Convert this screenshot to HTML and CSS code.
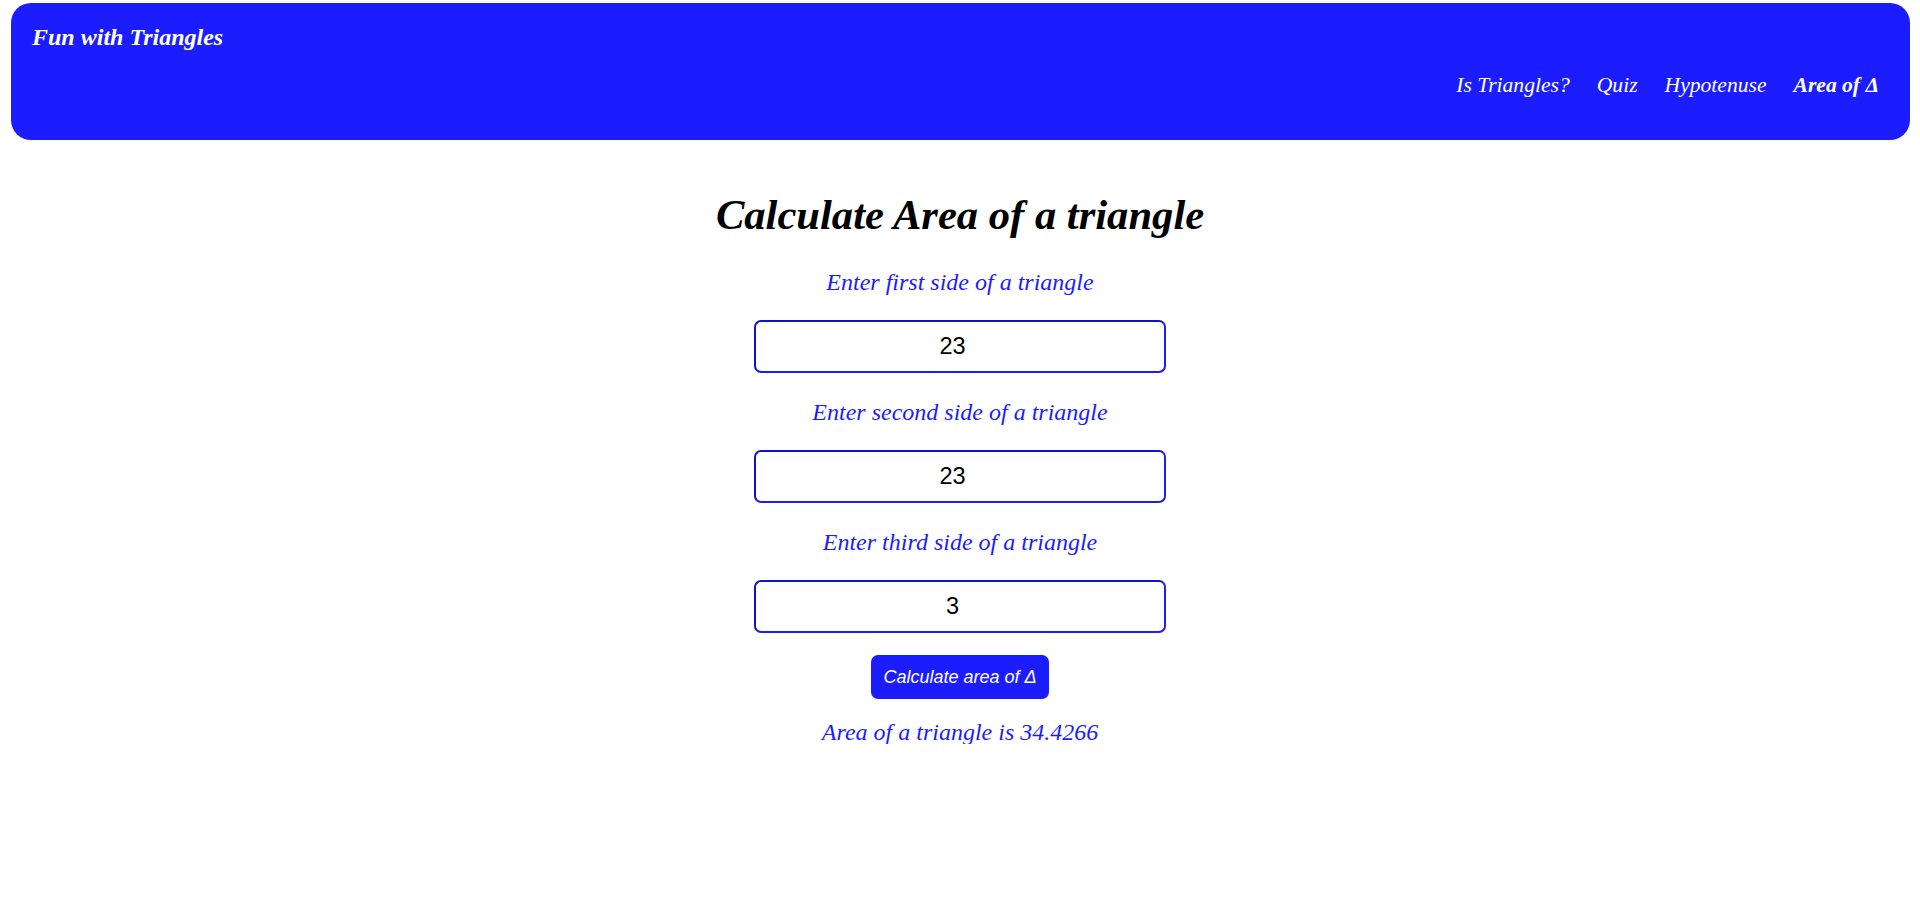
FILE: index.html
```html
<!DOCTYPE html>
<html lang="en">
<head>
<meta charset="utf-8">
<title>Area of a triangle</title>
<link rel="stylesheet" href="styles.css">
</head>
<body>
<header class="topbar">
  <div class="brand">Fun with Triangles</div>
  <nav class="nav">
    <a class="nav-link" href="#">Is Triangles?</a>
    <a class="nav-link" href="#">Quiz</a>
    <a class="nav-link" href="#">Hypotenuse</a>
    <a class="nav-link active" href="#">Area of Δ</a>
  </nav>
</header>
<main class="content">
  <h1 class="title">Calculate Area of a triangle</h1>
  <label class="field-label" for="s1">Enter first side of a triangle</label>
  <input class="side-input" id="s1" type="number" value="23">
  <label class="field-label" for="s2">Enter second side of a triangle</label>
  <input class="side-input" id="s2" type="number" value="23">
  <label class="field-label" for="s3">Enter third side of a triangle</label>
  <input class="side-input" id="s3" type="number" value="3">
  <button class="calc-btn" type="button">Calculate area of Δ</button>
  <p class="result">Area of a triangle is 34.4266</p>
</main>
</body>
</html>
```
FILE: styles.css
```css
html, body {
  margin: 0;
  padding: 0;
  background: #ffffff;
}

body {
  font-family: "Liberation Serif", "Times New Roman", serif;
}

.topbar {
  margin: 3px 10px 0 11px;
  height: 137px;
  box-sizing: border-box;
  padding: 19px 31px 0 21px;
  background: #1b1dff;
  border-radius: 20px;
  color: #ffffff;
  display: flex;
  flex-direction: column;
}

.brand {
  font-size: 24px;
  line-height: 30px;
  font-weight: bold;
  font-style: italic;
}

.nav {
  margin-top: 21px;
  display: flex;
  justify-content: flex-end;
  gap: 27px;
}

.nav-link {
  color: #ffffff;
  text-decoration: none;
  font-size: 21.6px;
  line-height: 24px;
  font-style: italic;
}

.nav-link.active {
  font-weight: bold;
}

.content {
  display: flex;
  flex-direction: column;
  align-items: center;
}

.title {
  margin: 50px 0 0 0;
  font-size: 42.6px;
  line-height: 50px;
  font-weight: bold;
  font-style: italic;
  color: #000000;
}

.field-label {
  margin-top: 30px;
  font-size: 24px;
  line-height: 24px;
  font-style: italic;
  color: #1b1dff;
}

.side-input + .field-label {
  margin-top: 27px;
}

.side-input {
  margin-top: 26px;
  width: 412px;
  height: 53px;
  box-sizing: border-box;
  border-width: 2px;
  border-style: solid;
  border-color: #1212c4 #1b1dff #1b1dff #1212c4;
  border-radius: 7px;
  font-family: "Liberation Sans", Arial, sans-serif;
  font-size: 23.5px;
  text-align: center;
  color: #000000;
  background: #ffffff;
  padding: 0 4px;
  outline: none;
}

.calc-btn {
  margin-top: 22px;
  height: 44px;
  padding: 0 12px;
  border: none;
  border-radius: 7px;
  background: #1b1dff;
  color: #ffffff;
  font-family: "Liberation Sans", Arial, sans-serif;
  font-size: 18px;
  font-style: italic;
}

.result {
  margin: 21px 0 0 0;
  font-size: 24px;
  line-height: 24px;
  font-style: italic;
  color: #1b1dff;
}
```
